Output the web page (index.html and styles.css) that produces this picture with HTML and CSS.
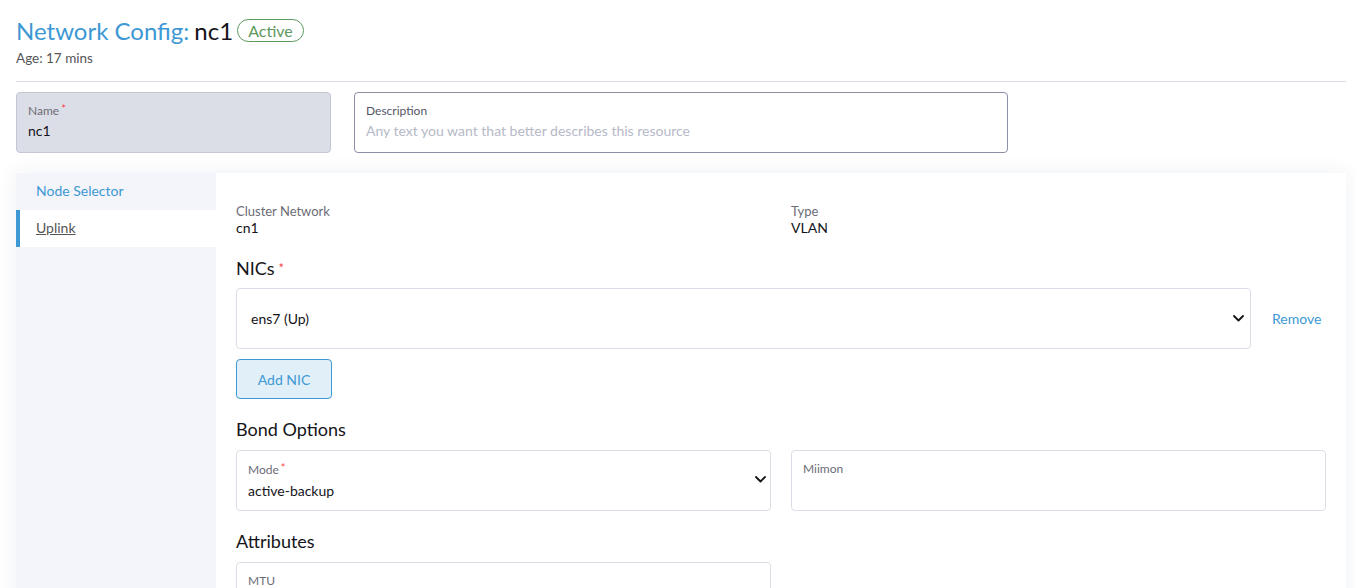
FILE: index.html
```html
<!DOCTYPE html>
<html lang="en">
<head>
<meta charset="utf-8">
<title>Network Config: nc1</title>
<link rel="stylesheet" href="styles.css">
</head>
<body>
<div class="page">
  <header class="masthead">
    <h1 class="title"><span class="title-kind">Network Config:</span> <span class="title-name">nc1</span> <span class="badge">Active</span></h1>
    <div class="age">Age: 17 mins</div>
  </header>

  <div class="name-row">
    <div class="field field-disabled">
      <label class="field-label">Name<span class="req">*</span></label>
      <div class="field-value">nc1</div>
    </div>
    <div class="field field-desc">
      <label class="field-label">Description</label>
      <div class="field-placeholder">Any text you want that better describes this resource</div>
    </div>
  </div>

  <div class="tabbed">
    <ul class="tabs">
      <li class="tab"><a class="tab-link">Node Selector</a></li>
      <li class="tab tab-active"><a class="tab-link">Uplink</a></li>
    </ul>
    <div class="tab-body">
      <div class="two-col">
        <div class="info">
          <div class="info-label">Cluster Network</div>
          <div class="info-value">cn1</div>
        </div>
        <div class="info">
          <div class="info-label">Type</div>
          <div class="info-value">VLAN</div>
        </div>
      </div>

      <h3 class="section-title section-first">NICs<span class="req">*</span></h3>
      <div class="nic-row">
        <div class="select-box">
          <span class="select-text">ens7 (Up)</span>
          <svg class="chevron" width="11" height="7" viewBox="0 0 11 7"><polyline points="1,1 5.5,5.5 10,1" fill="none" stroke="#141419" stroke-width="1.8" stroke-linecap="round" stroke-linejoin="round"/></svg>
        </div>
        <a class="remove-link">Remove</a>
      </div>
      <button class="btn-add">Add NIC</button>

      <h3 class="section-title">Bond Options</h3>
      <div class="two-col">
        <div class="field field-select">
          <div class="field-main">
            <label class="field-label">Mode<span class="req">*</span></label>
            <div class="field-value">active-backup</div>
          </div>
          <svg class="chevron" width="11" height="7" viewBox="0 0 11 7"><polyline points="1,1 5.5,5.5 10,1" fill="none" stroke="#141419" stroke-width="1.8" stroke-linecap="round" stroke-linejoin="round"/></svg>
        </div>
        <div class="field field-plain">
          <label class="field-label">Miimon</label>
          <div class="field-value"></div>
        </div>
      </div>

      <h3 class="section-title">Attributes</h3>
      <div class="two-col">
        <div class="field field-plain">
          <label class="field-label">MTU</label>
          <div class="field-value"></div>
        </div>
      </div>
    </div>
  </div>
</div>
</body>
</html>
```

FILE: styles.css
```css
* { box-sizing: border-box; }

html, body {
  margin: 0;
  padding: 0;
  background: #ffffff;
  font-family: Lato, "Noto Sans", "Liberation Sans", sans-serif;
  color: #141419;
  overflow: hidden;
}

.page {
  padding: 0 9px 0 16px;
}

.masthead {
  padding-top: 16px;
  border-bottom: 1px solid #dcdee7;
  padding-bottom: 15px;
}

.title {
  margin: 0;
  font-size: 24px;
  font-weight: 400;
  line-height: 29px;
  display: flex;
  align-items: center;
}

.title-kind { color: #3d98d3; }
.title-name { color: #141419; margin-left: 5px; }

.badge {
  display: inline-block;
  margin-left: 4px;
  border: 1px solid #5d995d;
  color: #5d995d;
  border-radius: 12px;
  font-size: 16px;
  line-height: 21px;
  padding: 0 10px;
}

.age {
  font-size: 13.5px;
  color: #555555;
  line-height: 16px;
  margin-top: 5px;
}

.name-row {
  display: grid;
  grid-template-columns: 315px 654px;
  column-gap: 23px;
  margin-top: 10px;
}

.field {
  border: 1px solid #dcdee7;
  border-radius: 4px;
  height: 61px;
  padding: 10px 11px 9px;
  background: #ffffff;
}

.field-disabled {
  background: #dcdee7;
  border-color: #c4c6d4;
}

.field-desc {
  border-color: #8b90a6;
}

.field-label {
  display: block;
  font-size: 12px;
  line-height: 15px;
  color: #6c6c76;
}

.field-desc .field-label { color: #555566; }

.req {
  color: #f64747;
  font-size: 11px;
  vertical-align: top;
  margin-left: 2px;
  position: relative;
  top: -2px;
}

.field-value {
  font-size: 14px;
  line-height: 17px;
  margin-top: 4px;
  color: #141419;
  min-height: 17px;
}

.field-placeholder {
  font-size: 14px;
  line-height: 17px;
  margin-top: 4px;
  color: #b6b9c8;
}

.tabbed {
  margin-top: 20px;
  display: grid;
  grid-template-columns: 200px 1fr;
  background: #ffffff;
  box-shadow: 0 0 20px 0 rgba(30, 40, 90, 0.07);
  min-height: 440px;
}

.tabs {
  list-style: none;
  margin: 0;
  padding: 0;
  background: #f4f5fa;
}

.tab {
  border-left: 4px solid transparent;
}

.tab-link {
  display: block;
  padding: 9px 16px 11px;
  font-size: 14px;
  line-height: 17px;
  color: #3d98d3;
}

.tab-active {
  background: #ffffff;
  border-left-color: #3d98d3;
}

.tab-active .tab-link {
  color: #555555;
  text-decoration: underline;
}

.tab-body {
  padding: 30px 20px 20px;
}

.two-col {
  display: grid;
  grid-template-columns: 1fr 1fr;
  column-gap: 20px;
}

.info-label {
  font-size: 13px;
  line-height: 16px;
  color: #6c6c76;
}

.info-value {
  font-size: 14px;
  line-height: 18px;
  color: #141419;
}

.section-title {
  margin: 20px 0 10px;
  font-size: 18px;
  font-weight: 400;
  line-height: 21px;
  color: #141419;
}

.section-first {
  margin-top: 21px;
  margin-bottom: 9px;
}

.section-title .req {
  font-size: 13px;
  margin-left: 4px;
  top: 0;
}

.nic-row {
  display: grid;
  grid-template-columns: 1fr 75px;
  align-items: center;
}

.select-box {
  height: 61px;
  border: 1px solid #dcdee7;
  border-radius: 4px;
  display: flex;
  align-items: center;
  justify-content: space-between;
  padding: 0 6px 0 14px;
}

.select-text {
  font-size: 14px;
  color: #141419;
}

.remove-link {
  font-size: 14px;
  color: #3d98d3;
  padding-left: 21px;
}

.btn-add {
  margin-top: 10px;
  width: 96px;
  height: 40px;
  border: 1px solid #3d98d3;
  background: #e1eff9;
  color: #3d98d3;
  border-radius: 4px;
  font-family: Lato, "Noto Sans", "Liberation Sans", sans-serif;
  font-size: 14px;
  padding: 0;
}

.field-plain {
  padding-top: 10px;
}

.field-select {
  display: flex;
  align-items: center;
  justify-content: space-between;
  padding-top: 11px;
  padding-right: 4px;
}

.field-select .field-main {
  align-self: flex-start;
}

.field-select .field-value {
  margin-top: 5px;
}

.field-select .chevron {
  margin-top: -4px;
}
```
